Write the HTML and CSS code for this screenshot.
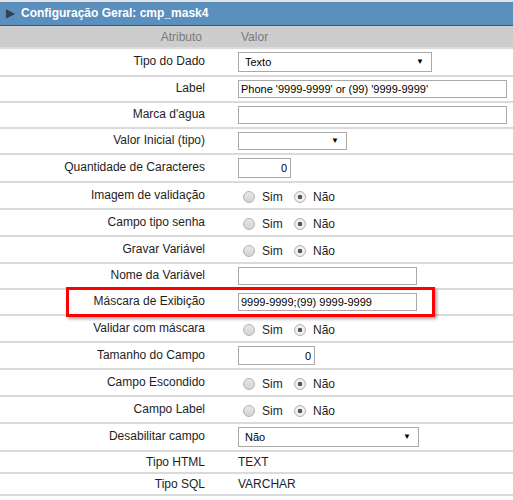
FILE: index.html
```html
<!DOCTYPE html>
<html lang="pt">
<head>
    <meta charset="UTF-8">
    <title>Configuração Geral: cmp_mask4</title>
    <link rel="stylesheet" href="styles.css">
</head>
<body>
    <div class="panel-title">
        <span class="arrow">&#9654;</span>
        <span>Configuração Geral: cmp_mask4</span>
    </div>

    <table class="props">
        <thead>
            <tr>
                <th class="attr">Atributo</th>
                <th class="val">Valor</th>
            </tr>
        </thead>
        <tbody>
            <tr>
                <td class="attr">Tipo do Dado</td>
                <td class="val">
                    <span class="select wide"><select><option>Texto</option></select></span>
                </td>
            </tr>
            <tr>
                <td class="attr">Label</td>
                <td class="val"><input type="text" class="text full" value="Phone '9999-9999' or (99) '9999-9999'"></td>
            </tr>
            <tr>
                <td class="attr">Marca d'agua</td>
                <td class="val"><input type="text" class="text full" value=""></td>
            </tr>
            <tr>
                <td class="attr">Valor Inicial (tipo)</td>
                <td class="val">
                    <span class="select small"><select><option></option></select></span>
                </td>
            </tr>
            <tr>
                <td class="attr">Quantidade de Caracteres</td>
                <td class="val"><input type="text" class="text num" value="0"></td>
            </tr>
            <tr>
                <td class="attr">Imagem de validação</td>
                <td class="val">
                    <label class="opt"><input type="radio" name="img"> Sim</label>
                    <label class="opt"><input type="radio" name="img" checked> Não</label>
                </td>
            </tr>
            <tr>
                <td class="attr">Campo tipo senha</td>
                <td class="val">
                    <label class="opt"><input type="radio" name="senha"> Sim</label>
                    <label class="opt"><input type="radio" name="senha" checked> Não</label>
                </td>
            </tr>
            <tr>
                <td class="attr">Gravar Variável</td>
                <td class="val">
                    <label class="opt"><input type="radio" name="gravar"> Sim</label>
                    <label class="opt"><input type="radio" name="gravar" checked> Não</label>
                </td>
            </tr>
            <tr>
                <td class="attr">Nome da Variável</td>
                <td class="val"><input type="text" class="text mid" value=""></td>
            </tr>
            <tr>
                <td class="attr highlight-cell">Máscara de Exibição<div class="highlight"></div></td>
                <td class="val"><input type="text" class="text mid" value="9999-9999;(99) 9999-9999"></td>
            </tr>
            <tr>
                <td class="attr">Validar com máscara</td>
                <td class="val">
                    <label class="opt"><input type="radio" name="validar"> Sim</label>
                    <label class="opt"><input type="radio" name="validar" checked> Não</label>
                </td>
            </tr>
            <tr>
                <td class="attr">Tamanho do Campo</td>
                <td class="val"><input type="text" class="text size" value="0"></td>
            </tr>
            <tr>
                <td class="attr">Campo Escondido</td>
                <td class="val">
                    <label class="opt"><input type="radio" name="escondido"> Sim</label>
                    <label class="opt"><input type="radio" name="escondido" checked> Não</label>
                </td>
            </tr>
            <tr>
                <td class="attr">Campo Label</td>
                <td class="val">
                    <label class="opt"><input type="radio" name="clabel"> Sim</label>
                    <label class="opt"><input type="radio" name="clabel" checked> Não</label>
                </td>
            </tr>
            <tr>
                <td class="attr">Desabilitar campo</td>
                <td class="val">
                    <span class="select mid"><select><option>Não</option></select></span>
                </td>
            </tr>
            <tr class="plain">
                <td class="attr">Tipo HTML</td>
                <td class="val">TEXT</td>
            </tr>
            <tr class="plain">
                <td class="attr">Tipo SQL</td>
                <td class="val">VARCHAR</td>
            </tr>
        </tbody>
    </table>
</body>
</html>
```

FILE: styles.css
```css
body {
    margin: 0;
    background: #fff;
    font-family: "Liberation Sans", Arial, sans-serif;
    font-size: 12px;
    color: #1e1e1e;
}

/* Panel header */
.panel-title {
    height: 23px;
    border-top: 2px solid #e2e2e2;
    border-bottom: 1px solid #4b5560;
    background: #5b8fbe;
    color: #fff;
    font-weight: bold;
    font-size: 12px;
    line-height: 23px;
    display: flex;
    align-items: center;
    gap: 6px;
    padding-left: 6px;
}

.panel-title .arrow {
    color: #33414e;
    font-size: 12px;
    font-weight: normal;
}

/* Property table */
.props {
    width: 100%;
    border-collapse: collapse;
    border-spacing: 0;
}

.props th {
    background: #cdcdcd;
    color: #7a7a7a;
    font-weight: normal;
    height: 21px;
    padding: 0;
}

.props th.attr {
    text-align: right;
    padding-right: 13px;
}

.props th.val {
    text-align: left;
    padding-left: 26px;
}

.props td {
    padding: 3px 0;
    border-bottom: 2px solid #dadada;
    vertical-align: middle;
    line-height: 14px;
}

.props td.attr {
    width: 205px;
    text-align: right;
    padding-right: 10px;
    padding-bottom: 5px;
}

.props td.val {
    padding-left: 23px;
    padding-right: 6px;
}

.props thead tr {
    border-bottom: 2px solid #dadada;
}

.props tr.plain td.attr {
    padding-bottom: 3px;
}

/* Inputs */
.text {
    box-sizing: border-box;
    height: 18px;
    margin: 0;
    padding: 0 2px;
    border: 1px solid #a9a9a9;
    font-family: "Liberation Sans", Arial, sans-serif;
    font-size: 11px;
    color: #000;
    display: block;
}

.text.full { width: 269px; }
.text.mid { width: 179px; }
.text.num { width: 53px; height: 20px; text-align: right; padding-right: 3px; }
.text.size { width: 77px; height: 19px; text-align: right; padding-right: 3px; }

.select {
    position: relative;
    display: block;
    height: 20px;
}

.select select {
    appearance: none;
    -webkit-appearance: none;
    box-sizing: border-box;
    width: 100%;
    height: 100%;
    margin: 0;
    padding: 0 6px;
    border: 1px solid #a9a9a9;
    border-radius: 0;
    background: #fff;
    font-family: "Liberation Sans", Arial, sans-serif;
    font-size: 11px;
    color: #000;
}

.select:after {
    content: "\25BC";
    position: absolute;
    right: 8px;
    top: 50%;
    margin-top: -6px;
    font-size: 8px;
    line-height: 12px;
    color: #000;
    pointer-events: none;
}

.select.wide { width: 194px; }
.select.small { width: 109px; height: 18px; }
.select.mid { width: 181px; }

/* Radios */
.opt {
    display: inline-flex;
    align-items: center;
    box-sizing: border-box;
    height: 19px;
    padding-top: 2px;
    margin-right: 3px;
    gap: 7px;
    vertical-align: top;
}

.opt input {
    appearance: none;
    -webkit-appearance: none;
    box-sizing: border-box;
    width: 12px;
    height: 12px;
    margin: 0 0 0 5px;
    border: 1px solid #b4b4b4;
    border-radius: 50%;
    background: linear-gradient(#e8e8e8, #d2d2d2);
}

.opt input:checked {
    background: radial-gradient(circle, #555 0, #555 2px, #f4f4f4 2.6px, #e4e4e4 100%);
}

/* Red highlight around the mask row */
.highlight-cell {
    position: relative;
}

.highlight {
    position: absolute;
    left: 66px;
    top: -3px;
    width: 369px;
    height: 30px;
    box-sizing: border-box;
    border: 3px solid #f00;
    box-shadow: 2px 2px 3px rgba(0, 0, 0, 0.35);
    pointer-events: none;
}
```
